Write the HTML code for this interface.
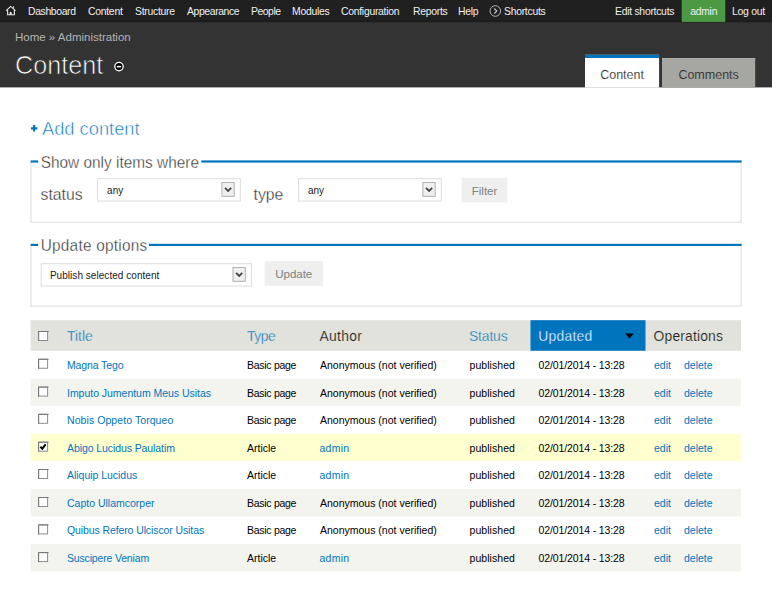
<!DOCTYPE html>
<html><head><meta charset="utf-8"><title>Content</title>
<style>
*{box-sizing:border-box;margin:0;padding:0}
html,body{width:772px;height:607px;overflow:hidden;background:#fff;font-family:"Liberation Sans",sans-serif;color:#000}
a{text-decoration:none;color:#0074bd}
#bg{position:absolute;left:0;top:0}
span,a{position:absolute;white-space:nowrap}
.tb{color:#f0f0f0;font-size:10.4px;letter-spacing:-0.27px;line-height:24px}
.crumb{color:#b4b4b4;font-size:11.5px;line-height:13px}
.title{color:#fff;font-size:25.2px;line-height:32px;-webkit-text-stroke:0.7px #333}
.tab{color:#2a2a2a;font-size:12.5px;line-height:34px;text-align:center}
.add{color:#0074bd;font-size:18.3px;line-height:22px;-webkit-text-stroke:0.55px #fff}
.leg{color:#333;font-size:15.4px;line-height:20px;-webkit-text-stroke:0.3px #fff;transform:scaleY(1.1);transform-origin:0 15px}
.lbl{color:#333;font-size:15.8px;line-height:20px;-webkit-text-stroke:0.3px #fff}
.opt{color:#1a1a1a;font-size:10px;line-height:26.6px}
.btn{color:#808080;font-size:11.5px;text-align:center}
.th{color:#222;font-size:13.9px;line-height:32.6px;-webkit-text-stroke:0.15px #e1e2dc}
a.th{-webkit-text-stroke:0.3px #e1e2dc}
a.th{color:#0074bd}
.td{font-size:10.5px}
</style></head><body>
<svg id="bg" width="772" height="607" viewBox="0 0 772 607">
<rect x="0.00" y="0.00" width="772.00" height="87.40" fill="#333"/>
<rect x="0.00" y="0.00" width="772.00" height="22.60" fill="#2a2a2a"/>
<rect x="0.00" y="0.00" width="772.00" height="21.70" fill="#181818"/>
<rect x="0.00" y="0.00" width="772.00" height="20.70" fill="#202020"/>
<rect x="681.70" y="0.00" width="43.60" height="21.90" fill="#4b9a43"/>
<rect x="585.00" y="54.80" width="74.10" height="32.80" fill="#fff"/>
<rect x="585.00" y="54.80" width="74.10" height="3.20" fill="#0074bd"/>
<rect x="662.00" y="58.10" width="93.20" height="29.30" fill="#a6a7a2"/>
<rect x="662.00" y="58.10" width="93.20" height="1.00" fill="#b0b1ac"/>
<rect x="30.50" y="160.40" width="1.00" height="62.30" fill="#dcdcdc"/>
<rect x="740.60" y="160.40" width="1.00" height="62.30" fill="#dcdcdc"/>
<rect x="30.50" y="221.70" width="711.10" height="1.00" fill="#dcdcdc"/>
<rect x="30.70" y="160.40" width="7.50" height="2.20" fill="#0074bd"/>
<rect x="201.30" y="160.40" width="540.30" height="2.20" fill="#0074bd"/>
<rect x="30.50" y="243.80" width="1.00" height="62.80" fill="#dcdcdc"/>
<rect x="740.60" y="243.80" width="1.00" height="62.80" fill="#dcdcdc"/>
<rect x="30.50" y="305.60" width="711.10" height="1.00" fill="#dcdcdc"/>
<rect x="30.70" y="243.80" width="7.50" height="2.20" fill="#0074bd"/>
<rect x="149.00" y="243.80" width="592.60" height="2.20" fill="#0074bd"/>
<rect x="97.60" y="178.70" width="142.70" height="22.30" fill="#fff" stroke="#dcdcdc" stroke-width="1"/>
<rect x="221.90" y="182.50" width="12.30" height="13.80" fill="#f0f0f0" stroke="#b0b0b0" stroke-width="1"/>
<path d="M225.00 187.80l3.1 3.1l3.1 -3.1" fill="none" stroke="#444" stroke-width="1.8"/>
<rect x="298.50" y="178.70" width="142.80" height="22.30" fill="#fff" stroke="#dcdcdc" stroke-width="1"/>
<rect x="422.90" y="182.50" width="12.30" height="13.80" fill="#f0f0f0" stroke="#b0b0b0" stroke-width="1"/>
<path d="M426.00 187.80l3.1 3.1l3.1 -3.1" fill="none" stroke="#444" stroke-width="1.8"/>
<rect x="41.20" y="263.70" width="210.20" height="22.30" fill="#fff" stroke="#dcdcdc" stroke-width="1"/>
<rect x="233.00" y="267.50" width="12.30" height="13.80" fill="#f0f0f0" stroke="#b0b0b0" stroke-width="1"/>
<path d="M236.10 272.80l3.1 3.1l3.1 -3.1" fill="none" stroke="#444" stroke-width="1.8"/>
<rect x="461.60" y="177.90" width="45.90" height="24.40" fill="#efefef"/>
<rect x="264.60" y="261.20" width="58.30" height="24.60" fill="#efefef"/>
<rect x="30.60" y="543.10" width="710.40" height="28.50" fill="#f3f4ee"/>
<rect x="30.60" y="515.40" width="710.40" height="28.70" fill="#fff"/>
<rect x="30.60" y="488.00" width="710.40" height="28.40" fill="#f3f4ee"/>
<rect x="30.60" y="460.00" width="710.40" height="29.00" fill="#fff"/>
<rect x="30.60" y="432.70" width="710.40" height="28.30" fill="#ffffd0"/>
<rect x="30.60" y="404.80" width="710.40" height="28.90" fill="#fff"/>
<rect x="30.60" y="377.60" width="710.40" height="28.20" fill="#f3f4ee"/>
<rect x="30.60" y="349.75" width="710.40" height="28.85" fill="#fff"/>
<rect x="30.60" y="320.20" width="710.40" height="30.55" fill="#e1e2dc"/>
<rect x="530.50" y="320.20" width="115.00" height="30.55" fill="#0074bd"/>
<path d="M625.2 333.6h8.6l-4.3 5z" fill="#000"/>
<rect x="38.60" y="331.50" width="9.00" height="9.00" fill="#fff" stroke="#8c8c8c" stroke-width="1"/>
<path d="M38.10 341.00v-9.5h10" fill="none" stroke="#777" stroke-width="1" transform="translate(.5 0)"/>
<rect x="38.60" y="359.25" width="9.00" height="9.00" fill="#fff" stroke="#8c8c8c" stroke-width="1"/>
<path d="M38.10 368.75v-9.5h10" fill="none" stroke="#777" stroke-width="1" transform="translate(.5 0)"/>
<rect x="38.60" y="387.10" width="9.00" height="9.00" fill="#fff" stroke="#8c8c8c" stroke-width="1"/>
<path d="M38.10 396.60v-9.5h10" fill="none" stroke="#777" stroke-width="1" transform="translate(.5 0)"/>
<rect x="38.60" y="414.30" width="9.00" height="9.00" fill="#fff" stroke="#8c8c8c" stroke-width="1"/>
<path d="M38.10 423.80v-9.5h10" fill="none" stroke="#777" stroke-width="1" transform="translate(.5 0)"/>
<rect x="38.60" y="442.20" width="9.00" height="9.00" fill="#fff" stroke="#8c8c8c" stroke-width="1"/>
<path d="M38.10 451.70v-9.5h10" fill="none" stroke="#777" stroke-width="1" transform="translate(.5 0)"/>
<path d="M40.40 446.70l1.9 2l3.3 -4.4" fill="none" stroke="#000" stroke-width="2"/>
<rect x="38.60" y="469.50" width="9.00" height="9.00" fill="#fff" stroke="#8c8c8c" stroke-width="1"/>
<path d="M38.10 479.00v-9.5h10" fill="none" stroke="#777" stroke-width="1" transform="translate(.5 0)"/>
<rect x="38.60" y="497.50" width="9.00" height="9.00" fill="#fff" stroke="#8c8c8c" stroke-width="1"/>
<path d="M38.10 507.00v-9.5h10" fill="none" stroke="#777" stroke-width="1" transform="translate(.5 0)"/>
<rect x="38.60" y="524.90" width="9.00" height="9.00" fill="#fff" stroke="#8c8c8c" stroke-width="1"/>
<path d="M38.10 534.40v-9.5h10" fill="none" stroke="#777" stroke-width="1" transform="translate(.5 0)"/>
<rect x="38.60" y="552.60" width="9.00" height="9.00" fill="#fff" stroke="#8c8c8c" stroke-width="1"/>
<path d="M38.10 562.10v-9.5h10" fill="none" stroke="#777" stroke-width="1" transform="translate(.5 0)"/>
<g fill="none" stroke="#e8e8e8" stroke-width="1.1"><path d="M6.1 10.7L10.7 6.4L15.5 10.7"/><path d="M7.6 10V14.7H14.4V10"/><path d="M13.6 6.2V8.6" stroke-width="0.9"/></g><rect x="9.6" y="12.1" width="2.1" height="2.8" fill="#e8e8e8"/>
<circle cx="495.3" cy="11" r="5.3" fill="none" stroke="#b4b4b4" stroke-width="1"/><path d="M494.3 8.5l2.5 2.5l-2.5 2.5" fill="none" stroke="#ccc" stroke-width="1.1"/>
<circle cx="119" cy="66.6" r="4.2" fill="#000" stroke="#fff" stroke-width="1.3"/><rect x="116.8" y="65.9" width="4.4" height="1.5" fill="#fff"/>
<path d="M34.1 125.1v6.4M30.9 128.3h6.4" stroke="#0074bd" stroke-width="2.2" fill="none"/>
</svg>
<span class="tb" style="left:28px;top:0px;letter-spacing:-0.358px">Dashboard</span>
<span class="tb" style="left:88px;top:0px">Content</span>
<span class="tb" style="left:135px;top:0px">Structure</span>
<span class="tb" style="left:187px;top:0px;letter-spacing:-0.381px">Appearance</span>
<span class="tb" style="left:251px;top:0px;letter-spacing:-0.470px">People</span>
<span class="tb" style="left:292px;top:0px">Modules</span>
<span class="tb" style="left:341px;top:0px">Configuration</span>
<span class="tb" style="left:413px;top:0px">Reports</span>
<span class="tb" style="left:458px;top:0px">Help</span>
<span class="tb" style="left:504px;top:0px">Shortcuts</span>
<span class="tb" style="left:615px;top:0px">Edit shortcuts</span>
<span class="tb" style="left:732px;top:0px">Log out</span>
<span class="tb" style="left:682px;top:0px;width:43.4px;text-align:center">admin</span>
<span class="crumb" style="left:15px;top:31px">Home » Administration</span>
<span class="title" style="left:15px;top:48.5px">Content</span>
<span class="tab" style="left:585px;top:58px;width:74.1px;-webkit-text-stroke:0.15px #fff">Content</span>
<span class="tab" style="left:662px;top:58px;width:93.2px;-webkit-text-stroke:0.15px #a6a7a2">Comments</span>
<a class="add" style="left:42px;top:117.5px">Add content</a>
<span class="leg" style="left:40.7px;top:152.7px">Show only items where</span>
<span class="leg" style="left:40.7px;top:236.1px;letter-spacing:0.23px">Update options</span>
<span class="lbl" style="left:40.5px;top:184.6px">status</span>
<span class="lbl" style="left:253.5px;top:184.6px">type</span>
<span class="opt" style="left:107.1px;top:178.2px">any</span>
<span class="opt" style="left:308px;top:178.2px">any</span>
<span class="opt" style="left:49.9px;top:263.2px;letter-spacing:0.045px">Publish selected content</span>
<span class="btn" style="left:461.6px;top:177.9px;width:45.9px;line-height:26.4px">Filter</span>
<span class="btn" style="left:264.6px;top:261.2px;width:58.3px;line-height:27.4px">Update</span>
<a class="th" style="left:67px;top:320.2px">Title</a>
<a class="th" style="left:247px;top:320.2px;letter-spacing:-0.45px">Type</a>
<span class="th" style="left:319.5px;top:320.2px;letter-spacing:0.3px">Author</span>
<a class="th" style="left:469px;top:320.2px;letter-spacing:-0.15px">Status</a>
<span class="th" style="left:538.3px;top:320.2px;color:#fff;-webkit-text-stroke:0.3px #0074bd;letter-spacing:0.25px">Updated</span>
<span class="th" style="left:653.6px;top:320.2px;letter-spacing:0.15px">Operations</span>
<a class="td" style="left:67px;top:350.75px;line-height:29.85px;letter-spacing:-0.122px">Magna Tego</a>
<span class="td" style="left:247px;top:350.75px;line-height:29.85px;letter-spacing:-0.278px">Basic page</span>
<span class="td" style="left:320px;top:350.75px;line-height:29.85px">Anonymous (not verified)</span>
<span class="td" style="left:469.6px;top:350.75px;line-height:29.85px;letter-spacing:0.037px">published</span>
<span class="td" style="left:538.6px;top:350.75px;line-height:29.85px;letter-spacing:-0.124px">02/01/2014 - 13:28</span>
<a class="td" style="left:654px;top:350.75px;line-height:29.85px">edit</a>
<a class="td" style="left:684px;top:350.75px;line-height:29.85px">delete</a>
<a class="td" style="left:67px;top:378.6px;line-height:29.20px;letter-spacing:-0.027px">Imputo Jumentum Meus Usitas</a>
<span class="td" style="left:247px;top:378.6px;line-height:29.20px;letter-spacing:-0.278px">Basic page</span>
<span class="td" style="left:320px;top:378.6px;line-height:29.20px">Anonymous (not verified)</span>
<span class="td" style="left:469.6px;top:378.6px;line-height:29.20px;letter-spacing:0.037px">published</span>
<span class="td" style="left:538.6px;top:378.6px;line-height:29.20px;letter-spacing:-0.124px">02/01/2014 - 13:28</span>
<a class="td" style="left:654px;top:378.6px;line-height:29.20px">edit</a>
<a class="td" style="left:684px;top:378.6px;line-height:29.20px">delete</a>
<a class="td" style="left:67px;top:405.8px;line-height:29.90px;letter-spacing:0.074px">Nobis Oppeto Torqueo</a>
<span class="td" style="left:247px;top:405.8px;line-height:29.90px;letter-spacing:-0.278px">Basic page</span>
<span class="td" style="left:320px;top:405.8px;line-height:29.90px">Anonymous (not verified)</span>
<span class="td" style="left:469.6px;top:405.8px;line-height:29.90px;letter-spacing:0.037px">published</span>
<span class="td" style="left:538.6px;top:405.8px;line-height:29.90px;letter-spacing:-0.124px">02/01/2014 - 13:28</span>
<a class="td" style="left:654px;top:405.8px;line-height:29.90px">edit</a>
<a class="td" style="left:684px;top:405.8px;line-height:29.90px">delete</a>
<a class="td" style="left:67px;top:433.7px;line-height:29.30px;letter-spacing:-0.086px">Abigo Lucidus Paulatim</a>
<span class="td" style="left:247px;top:433.7px;line-height:29.30px">Article</span>
<a class="td" style="left:319.5px;top:433.7px;line-height:29.30px;letter-spacing:0.275px">admin</a>
<span class="td" style="left:469.6px;top:433.7px;line-height:29.30px;letter-spacing:0.037px">published</span>
<span class="td" style="left:538.6px;top:433.7px;line-height:29.30px;letter-spacing:-0.124px">02/01/2014 - 13:28</span>
<a class="td" style="left:654px;top:433.7px;line-height:29.30px">edit</a>
<a class="td" style="left:684px;top:433.7px;line-height:29.30px">delete</a>
<a class="td" style="left:67px;top:461.0px;line-height:28.00px;letter-spacing:-0.029px">Aliquip Lucidus</a>
<span class="td" style="left:247px;top:461.0px;line-height:28.00px">Article</span>
<a class="td" style="left:319.5px;top:461.0px;line-height:28.00px;letter-spacing:0.275px">admin</a>
<span class="td" style="left:469.6px;top:461.0px;line-height:28.00px;letter-spacing:0.037px">published</span>
<span class="td" style="left:538.6px;top:461.0px;line-height:28.00px;letter-spacing:-0.124px">02/01/2014 - 13:28</span>
<a class="td" style="left:654px;top:461.0px;line-height:28.00px">edit</a>
<a class="td" style="left:684px;top:461.0px;line-height:28.00px">delete</a>
<a class="td" style="left:67px;top:489.0px;line-height:29.40px">Capto Ullamcorper</a>
<span class="td" style="left:247px;top:489.0px;line-height:29.40px;letter-spacing:-0.278px">Basic page</span>
<span class="td" style="left:320px;top:489.0px;line-height:29.40px">Anonymous (not verified)</span>
<span class="td" style="left:469.6px;top:489.0px;line-height:29.40px;letter-spacing:0.037px">published</span>
<span class="td" style="left:538.6px;top:489.0px;line-height:29.40px;letter-spacing:-0.124px">02/01/2014 - 13:28</span>
<a class="td" style="left:654px;top:489.0px;line-height:29.40px">edit</a>
<a class="td" style="left:684px;top:489.0px;line-height:29.40px">delete</a>
<a class="td" style="left:67px;top:516.4px;line-height:29.70px;letter-spacing:-0.104px">Quibus Refero Ulciscor Usitas</a>
<span class="td" style="left:247px;top:516.4px;line-height:29.70px;letter-spacing:-0.278px">Basic page</span>
<span class="td" style="left:320px;top:516.4px;line-height:29.70px">Anonymous (not verified)</span>
<span class="td" style="left:469.6px;top:516.4px;line-height:29.70px;letter-spacing:0.037px">published</span>
<span class="td" style="left:538.6px;top:516.4px;line-height:29.70px;letter-spacing:-0.124px">02/01/2014 - 13:28</span>
<a class="td" style="left:654px;top:516.4px;line-height:29.70px">edit</a>
<a class="td" style="left:684px;top:516.4px;line-height:29.70px">delete</a>
<a class="td" style="left:67px;top:544.1px;line-height:29.50px;letter-spacing:-0.167px">Suscipere Veniam</a>
<span class="td" style="left:247px;top:544.1px;line-height:29.50px">Article</span>
<a class="td" style="left:319.5px;top:544.1px;line-height:29.50px;letter-spacing:0.275px">admin</a>
<span class="td" style="left:469.6px;top:544.1px;line-height:29.50px;letter-spacing:0.037px">published</span>
<span class="td" style="left:538.6px;top:544.1px;line-height:29.50px;letter-spacing:-0.124px">02/01/2014 - 13:28</span>
<a class="td" style="left:654px;top:544.1px;line-height:29.50px">edit</a>
<a class="td" style="left:684px;top:544.1px;line-height:29.50px">delete</a>
</body></html>
